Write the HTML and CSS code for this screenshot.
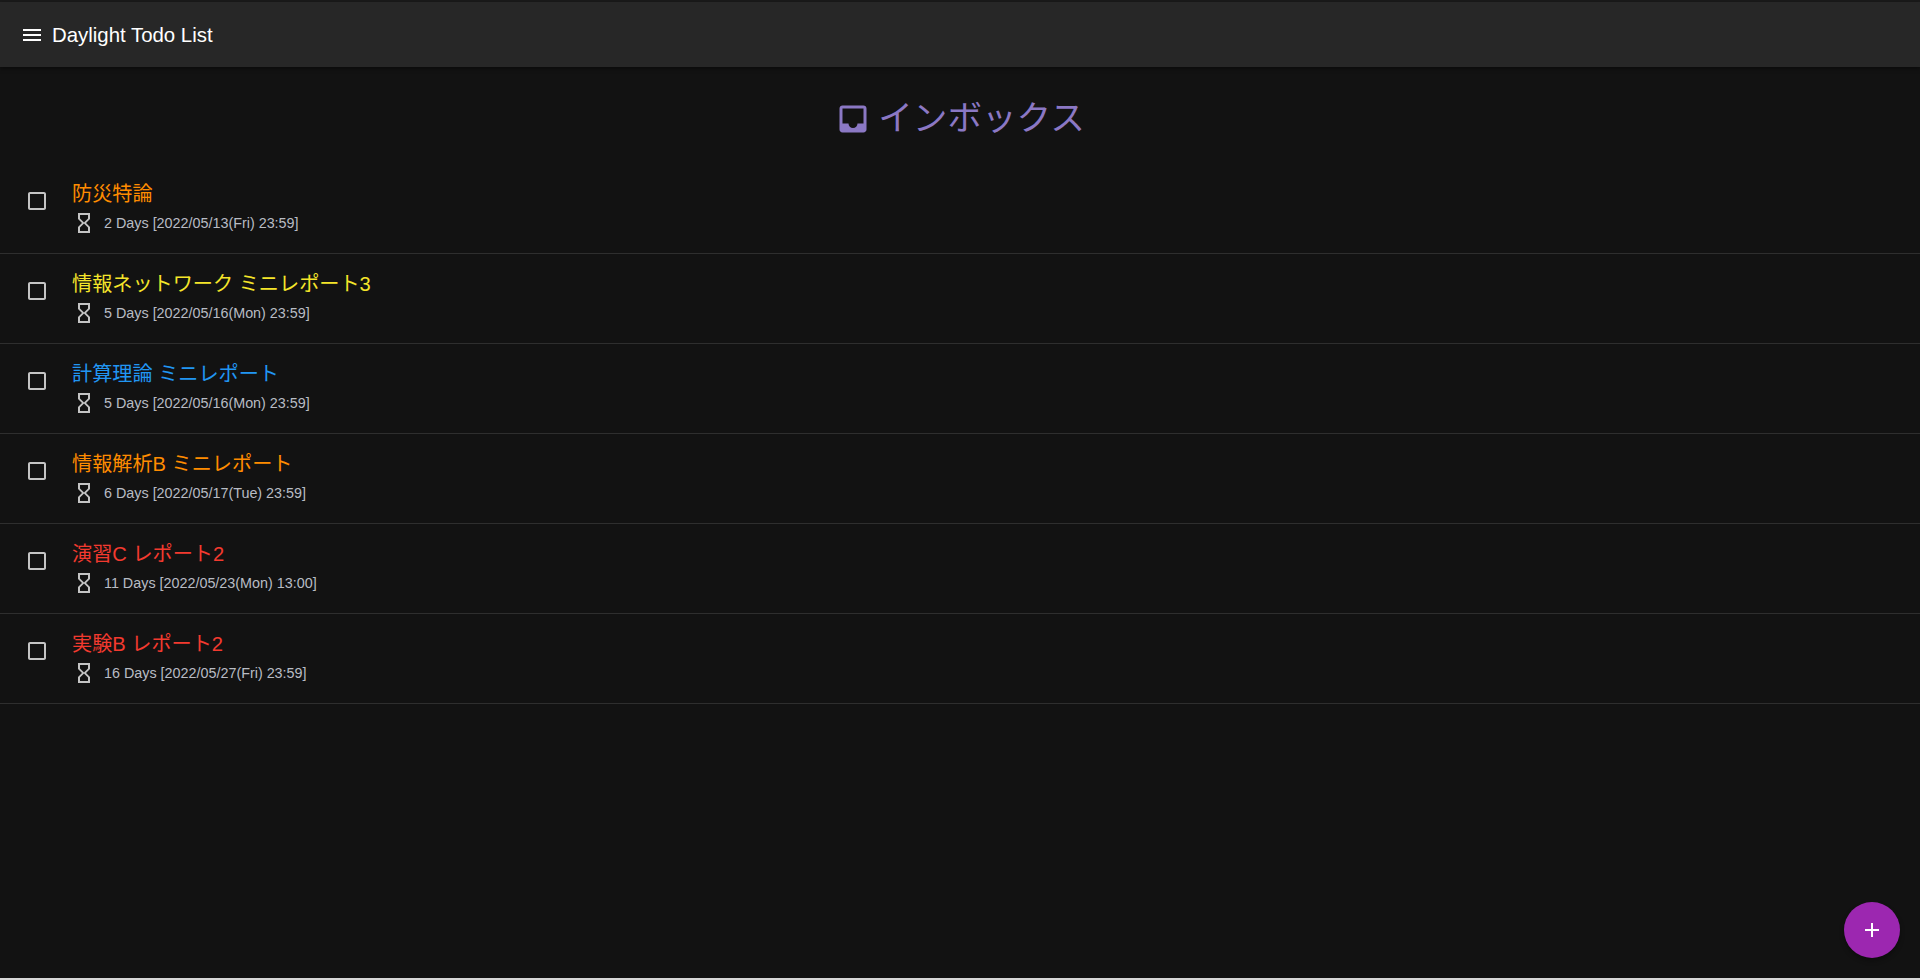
FILE: index.html
```html
<!DOCTYPE html>
<html lang="ja">
<head>
<meta charset="utf-8">
<title>Daylight Todo List</title>
<link rel="stylesheet" href="styles.css">
</head>
<body>
<div class="app">
  <div class="topline"></div>
  <header class="appbar">
    <svg class="menu-icon" viewBox="0 0 24 24"><path d="M3 18h18v-2H3v2zm0-5h18v-2H3v2zm0-7v2h18V6H3z"/></svg>
    <span class="appbar-title">Daylight Todo List</span>
  </header>
  <main class="content">
    <h1 class="page-title">
      <svg class="inbox-icon" viewBox="0 0 24 24"><path d="M19 3H4.99c-1.11 0-1.98.89-1.98 2L3 19c0 1.1.88 2 1.99 2H19c1.1 0 2-.9 2-2V5c0-1.11-.9-2-2-2zm0 12h-4c0 1.66-1.35 3-3 3s-3-1.34-3-3H4.99V5H19v10z"/></svg>
      <span>インボックス</span>
    </h1>
    <ul class="todo-list">
      <li class="todo">
        <svg class="check" viewBox="0 0 24 24"><path d="M19 5v14H5V5h14m0-2H5c-1.1 0-2 .9-2 2v14c0 1.1.9 2 2 2h14c1.1 0 2-.9 2-2V5c0-1.1-.9-2-2-2z"/></svg>
        <div class="todo-text">
          <div class="todo-title orange">防災特論</div>
          <div class="todo-due"><svg class="hourglass" viewBox="0 0 24 24"><path d="M6 2v6h.01L6 8.01 10 12l-4 4 .01.01H6V22h12v-5.99h-.01L18 16l-4-4 4-3.99-.01-.01H18V2H6zm10 14.5V20H8v-3.5l4-4 4 4zm-4-5l-4-4V4h8v3.5l-4 4z"/></svg><span>2 Days [2022/05/13(Fri) 23:59]</span></div>
        </div>
      </li>
      <li class="todo">
        <svg class="check" viewBox="0 0 24 24"><path d="M19 5v14H5V5h14m0-2H5c-1.1 0-2 .9-2 2v14c0 1.1.9 2 2 2h14c1.1 0 2-.9 2-2V5c0-1.1-.9-2-2-2z"/></svg>
        <div class="todo-text">
          <div class="todo-title yellow">情報ネットワーク ミニレポート3</div>
          <div class="todo-due"><svg class="hourglass" viewBox="0 0 24 24"><path d="M6 2v6h.01L6 8.01 10 12l-4 4 .01.01H6V22h12v-5.99h-.01L18 16l-4-4 4-3.99-.01-.01H18V2H6zm10 14.5V20H8v-3.5l4-4 4 4zm-4-5l-4-4V4h8v3.5l-4 4z"/></svg><span>5 Days [2022/05/16(Mon) 23:59]</span></div>
        </div>
      </li>
      <li class="todo">
        <svg class="check" viewBox="0 0 24 24"><path d="M19 5v14H5V5h14m0-2H5c-1.1 0-2 .9-2 2v14c0 1.1.9 2 2 2h14c1.1 0 2-.9 2-2V5c0-1.1-.9-2-2-2z"/></svg>
        <div class="todo-text">
          <div class="todo-title blue">計算理論 ミニレポート</div>
          <div class="todo-due"><svg class="hourglass" viewBox="0 0 24 24"><path d="M6 2v6h.01L6 8.01 10 12l-4 4 .01.01H6V22h12v-5.99h-.01L18 16l-4-4 4-3.99-.01-.01H18V2H6zm10 14.5V20H8v-3.5l4-4 4 4zm-4-5l-4-4V4h8v3.5l-4 4z"/></svg><span>5 Days [2022/05/16(Mon) 23:59]</span></div>
        </div>
      </li>
      <li class="todo">
        <svg class="check" viewBox="0 0 24 24"><path d="M19 5v14H5V5h14m0-2H5c-1.1 0-2 .9-2 2v14c0 1.1.9 2 2 2h14c1.1 0 2-.9 2-2V5c0-1.1-.9-2-2-2z"/></svg>
        <div class="todo-text">
          <div class="todo-title orange">情報解析B ミニレポート</div>
          <div class="todo-due"><svg class="hourglass" viewBox="0 0 24 24"><path d="M6 2v6h.01L6 8.01 10 12l-4 4 .01.01H6V22h12v-5.99h-.01L18 16l-4-4 4-3.99-.01-.01H18V2H6zm10 14.5V20H8v-3.5l4-4 4 4zm-4-5l-4-4V4h8v3.5l-4 4z"/></svg><span>6 Days [2022/05/17(Tue) 23:59]</span></div>
        </div>
      </li>
      <li class="todo">
        <svg class="check" viewBox="0 0 24 24"><path d="M19 5v14H5V5h14m0-2H5c-1.1 0-2 .9-2 2v14c0 1.1.9 2 2 2h14c1.1 0 2-.9 2-2V5c0-1.1-.9-2-2-2z"/></svg>
        <div class="todo-text">
          <div class="todo-title red">演習C レポート2</div>
          <div class="todo-due"><svg class="hourglass" viewBox="0 0 24 24"><path d="M6 2v6h.01L6 8.01 10 12l-4 4 .01.01H6V22h12v-5.99h-.01L18 16l-4-4 4-3.99-.01-.01H18V2H6zm10 14.5V20H8v-3.5l4-4 4 4zm-4-5l-4-4V4h8v3.5l-4 4z"/></svg><span>11 Days [2022/05/23(Mon) 13:00]</span></div>
        </div>
      </li>
      <li class="todo">
        <svg class="check" viewBox="0 0 24 24"><path d="M19 5v14H5V5h14m0-2H5c-1.1 0-2 .9-2 2v14c0 1.1.9 2 2 2h14c1.1 0 2-.9 2-2V5c0-1.1-.9-2-2-2z"/></svg>
        <div class="todo-text">
          <div class="todo-title red">実験B レポート2</div>
          <div class="todo-due"><svg class="hourglass" viewBox="0 0 24 24"><path d="M6 2v6h.01L6 8.01 10 12l-4 4 .01.01H6V22h12v-5.99h-.01L18 16l-4-4 4-3.99-.01-.01H18V2H6zm10 14.5V20H8v-3.5l4-4 4 4zm-4-5l-4-4V4h8v3.5l-4 4z"/></svg><span>16 Days [2022/05/27(Fri) 23:59]</span></div>
        </div>
      </li>
    </ul>
  </main>
  <button class="fab" type="button" aria-label="add"><svg viewBox="0 0 24 24"><path d="M19 13h-6v6h-2v-6H5v-2h6V5h2v6h6v2z"/></svg></button>
  <div class="bottomline"></div>
</div>
</body>
</html>
```
FILE: styles.css
```css
* { box-sizing: border-box; }
html, body { margin: 0; height: 100%; }
body {
  background: #121212;
  color: #fff;
  font-family: "Liberation Sans", "Noto Sans CJK JP", sans-serif;
  overflow: hidden;
}
.app {
  position: relative;
  height: 980px;
  display: flex;
  flex-direction: column;
}
.topline { height: 2px; background: #1a1a1a; flex: none; }
.appbar {
  flex: none;
  height: 65px;
  background: #272727;
  display: flex;
  align-items: center;
  padding-left: 20px;
  gap: 8px;
  box-shadow: 0 2px 4px rgba(0,0,0,.4);
}
.menu-icon { width: 24px; height: 24px; fill: #fff; }
.appbar-title { font-size: 20.4px; line-height: 1.6; padding-top: 2px; }
.content { flex: 1; min-height: 0; }
.page-title {
  margin: 0;
  height: 97px;
  padding-top: 31px;
  display: flex;
  justify-content: center;
  align-items: flex-start;
  gap: 7px;
  color: #8b78c4;
  font-size: 34.6px;
  font-weight: 400;
  line-height: 1.2;
}
.inbox-icon { width: 36px; height: 36px; fill: #8b78c4; margin-top: 3px; }
.todo-list { list-style: none; margin: 0; padding: 0; }
.todo {
  height: 90px;
  border-bottom: 1px solid #2e2e2e;
  display: flex;
  align-items: flex-start;
}
.check { width: 24px; height: 24px; fill: #c4c4c4; margin: 25px 0 0 25px; flex: none; }
.todo-text { margin-left: 23px; padding-top: 15px; }
.todo-title { font-size: 20.15px; line-height: 30px; }
.orange { color: #ff8c00; }
.yellow { color: #f5e52a; }
.blue { color: #2196f3; }
.red { color: #f33a2f; }
.todo-due {
  display: flex;
  align-items: center;
  font-size: 14.35px;
  line-height: 20px;
  color: #b8bcc4;
  margin-top: 2px;
}
.hourglass { width: 24px; height: 24px; fill: #c4c4c4; flex: none; margin-right: 8px; }
.fab {
  position: absolute;
  right: 20px;
  bottom: 22px;
  width: 56px;
  height: 56px;
  border: 0;
  padding: 16px;
  border-radius: 50%;
  background: #9c27b0;
  display: flex;
  box-shadow: 0 3px 5px rgba(0,0,0,.3);
}
.fab svg { width: 24px; height: 24px; fill: #fff; }
.bottomline { position: absolute; left: 0; right: 0; bottom: 0; height: 2px; background: #d8d8d8; }
```
